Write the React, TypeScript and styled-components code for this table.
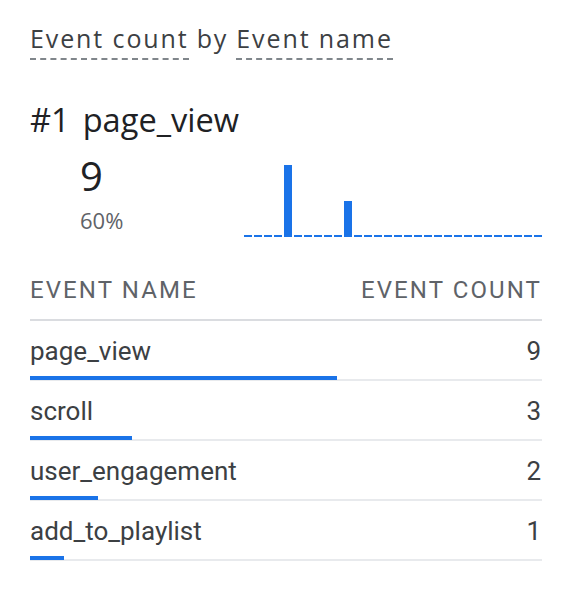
import React from "react";
import styled, { createGlobalStyle } from "styled-components";

const Global = createGlobalStyle`
  html, body { margin: 0; padding: 0; background: #ffffff; }
  body { font-family: Roboto, "Liberation Sans", sans-serif; }
`;

const Card = styled.div`
  width: 512px;
  padding: 20px 30px 0 30px;
  display: flex;
  flex-direction: column;
`;

const Title = styled.div`
  font-family: "Open Sans", Roboto, sans-serif;
  font-size: 25px;
  letter-spacing: 1.9px;
  color: #3c4043;
  line-height: 36px;
  display: flex;
  gap: 8px;
  align-items: flex-start;
`;

const Dim = styled.span`
  padding-bottom: 2px;
  border-bottom: 2px dashed #80868b;
`;

const Rank = styled.div`
  margin-top: 40px;
  font-family: "Open Sans", Roboto, sans-serif;
  font-size: 32.6px;
  line-height: 40px;
  color: #202124;
  display: flex;
  gap: 13px;
`;

const Hero = styled.div`
  display: flex;
  justify-content: space-between;
  align-items: flex-start;
  margin-top: 12px;
`;

const Stat = styled.div`
  padding-left: 50px;
  display: flex;
  flex-direction: column;
`;

const BigNum = styled.div`
  font-family: "Open Sans", Roboto, sans-serif;
  font-size: 40px;
  line-height: 48px;
  color: #202124;
`;

const Pct = styled.div`
  font-family: "Open Sans", Roboto, sans-serif;
  font-size: 22px;
  line-height: 28px;
  color: #5f6368;
  margin-top: 6px;
`;

const Chart = styled.svg`
  display: block;
  margin-top: 13px;
`;

const Table = styled.div`
  margin-top: 39px;
  display: flex;
  flex-direction: column;
`;

const HeadRow = styled.div`
  display: flex;
  justify-content: space-between;
  font-family: Roboto, sans-serif;
  font-size: 24px;
  letter-spacing: 2.1px;
  color: #5f6368;
  line-height: 28px;
  padding: 0 0 15px 0;
  border-bottom: 2px solid #dadce0;
`;

const Row = styled.div`
  position: relative;
  height: 58px;
  display: flex;
  justify-content: space-between;
  align-items: flex-start;
  border-bottom: 2px solid #e8eaed;
  font-family: Roboto, sans-serif;
  font-size: 26px;
  line-height: 30px;
  color: #3c4043;
`;

const Cell = styled.span<{ $num?: boolean }>`
  margin-top: 15px;
  margin-right: ${(p) => (p.$num ? "1px" : "0")};
`;

const Bar = styled.div`
  position: absolute;
  left: 0;
  bottom: -1px;
  height: 4px;
  background: #1a73e8;
`;

const rows = [
  { name: "page_view", count: 9 },
  { name: "scroll", count: 3 },
  { name: "user_engagement", count: 2 },
  { name: "add_to_playlist", count: 1 },
];
const total = 15;

function Sparkline() {
  const w = 298;
  const h = 72;
  const dashes = [];
  for (let x = 0; x < w; x += 10) {
    dashes.push(<rect key={x} x={x} y={h - 2} width={8} height={2} fill="#1a73e8" />);
  }
  return (
    <Chart width={w} height={h} viewBox={`0 0 ${w} ${h}`}>
      {dashes}
      <rect x={40} y={0} width={8} height={h} fill="#1a73e8" />
      <rect x={100} y={h - 36} width={8} height={36} fill="#1a73e8" />
    </Chart>
  );
}

export default function App() {
  return (
    <>
      <Global />
      <Card>
        <Title>
          <Dim>Event count</Dim>
          <span>by</span>
          <Dim>Event name</Dim>
        </Title>
        <Rank>
          <span>#1</span>
          <span>page_view</span>
        </Rank>
        <Hero>
          <Stat>
            <BigNum>9</BigNum>
            <Pct>60%</Pct>
          </Stat>
          <Sparkline />
        </Hero>
        <Table>
          <HeadRow>
            <span>EVENT NAME</span>
            <span>EVENT COUNT</span>
          </HeadRow>
          {rows.map((r) => (
            <Row key={r.name}>
              <Cell>{r.name}</Cell>
              <Cell $num>{r.count}</Cell>
              <Bar style={{ width: `${(r.count / total) * 100}%` }} />
            </Row>
          ))}
        </Table>
      </Card>
    </>
  );
}
